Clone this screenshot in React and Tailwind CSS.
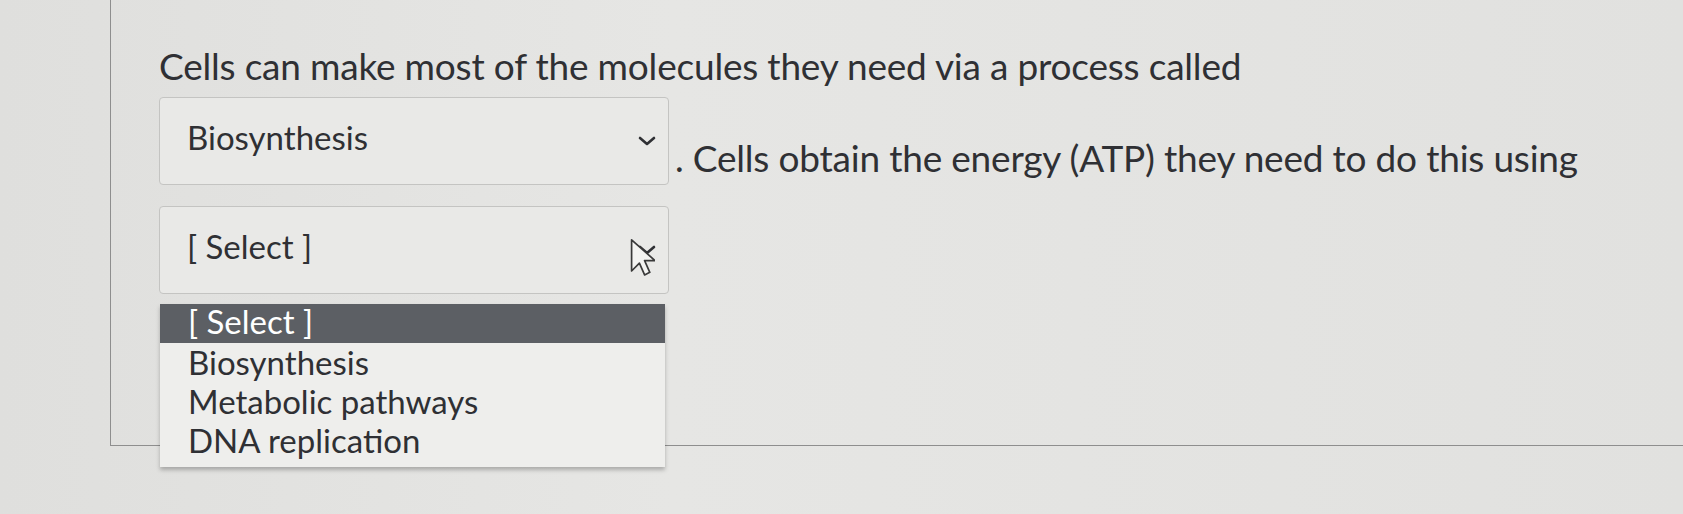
import React from "react";

const options = ["[ Select ]", "Biosynthesis", "Metabolic pathways", "DNA replication"];

const Chevron = () => (
  <svg viewBox="0 0 18 10" className="mt-[19px] w-[18px] h-[10px] shrink-0 text-[#2f3034]" fill="none" stroke="currentColor" strokeWidth="2.6" strokeLinecap="round" strokeLinejoin="round">
    <path d="M2 2l7 6 7-6" />
  </svg>
);

const Pointer = () => (
  <svg viewBox="0 0 20 30" className="absolute left-[470px] top-[32px] w-[26px] h-[40px]">
    <path d="M2 1v24l6-6 4 9 4-2-4-9h8z" fill="#f4f4f2" stroke="#3a3a3a" strokeWidth="1.3" strokeLinejoin="round" />
  </svg>
);

function Select({ value }) {
  return (
    <div className="flex items-start justify-between w-[510px] h-[88px] shrink-0 rounded-[4px] border border-[#c4c4c2] bg-[#e9e9e7] pl-[27px] pr-[12px] pt-[19px] text-[33px] leading-[40px] text-[#2f3034]">
      <span>{value}</span>
      <Chevron />
    </div>
  );
}

export default function App() {
  return (
    <div className="w-full h-[514px] overflow-hidden bg-[linear-gradient(90deg,#dfdfdd,#e6e6e4_40%,#e1e1df)] font-['Lato','Liberation_Sans',sans-serif] text-[#2f3034]">
      {/* question panel */}
      <div className="ml-[110px] h-[446px] border-l border-b border-[#8e8e8e] pl-[48px] pt-[42px]">
        <p className="text-[37px] leading-[48px] tracking-[-0.2px]">
          Cells can make most of the molecules they need via a process called
        </p>

        <div className="mt-[7px] flex items-end">
          <Select value="Biosynthesis" />
          <span className="pl-[6px] pb-[3px] text-[37px] leading-[48px] tracking-[-0.2px]">
            . Cells obtain the energy (ATP) they need to do this using
          </span>
        </div>

        <div className="relative mt-[21px] w-fit">
          <Select value="[ Select ]" />

          {/* open option list */}
          <ul className="absolute left-[1px] top-[98px] z-10 w-[505px] bg-[#eeeeec] shadow-[0_3px_4px_rgba(0,0,0,0.25)] text-[33px] pb-[7px]">
            {options.map((opt, i) => (
              <li
                key={opt}
                className={i === 0 ? "bg-[#5c5f64] text-white pl-[28px] h-[39px] leading-[35px]" : "pl-[28px] leading-[39px] text-[#2f3034]"}
              >
                {opt}
              </li>
            ))}
          </ul>

          <Pointer />
        </div>
      </div>
    </div>
  );
}
